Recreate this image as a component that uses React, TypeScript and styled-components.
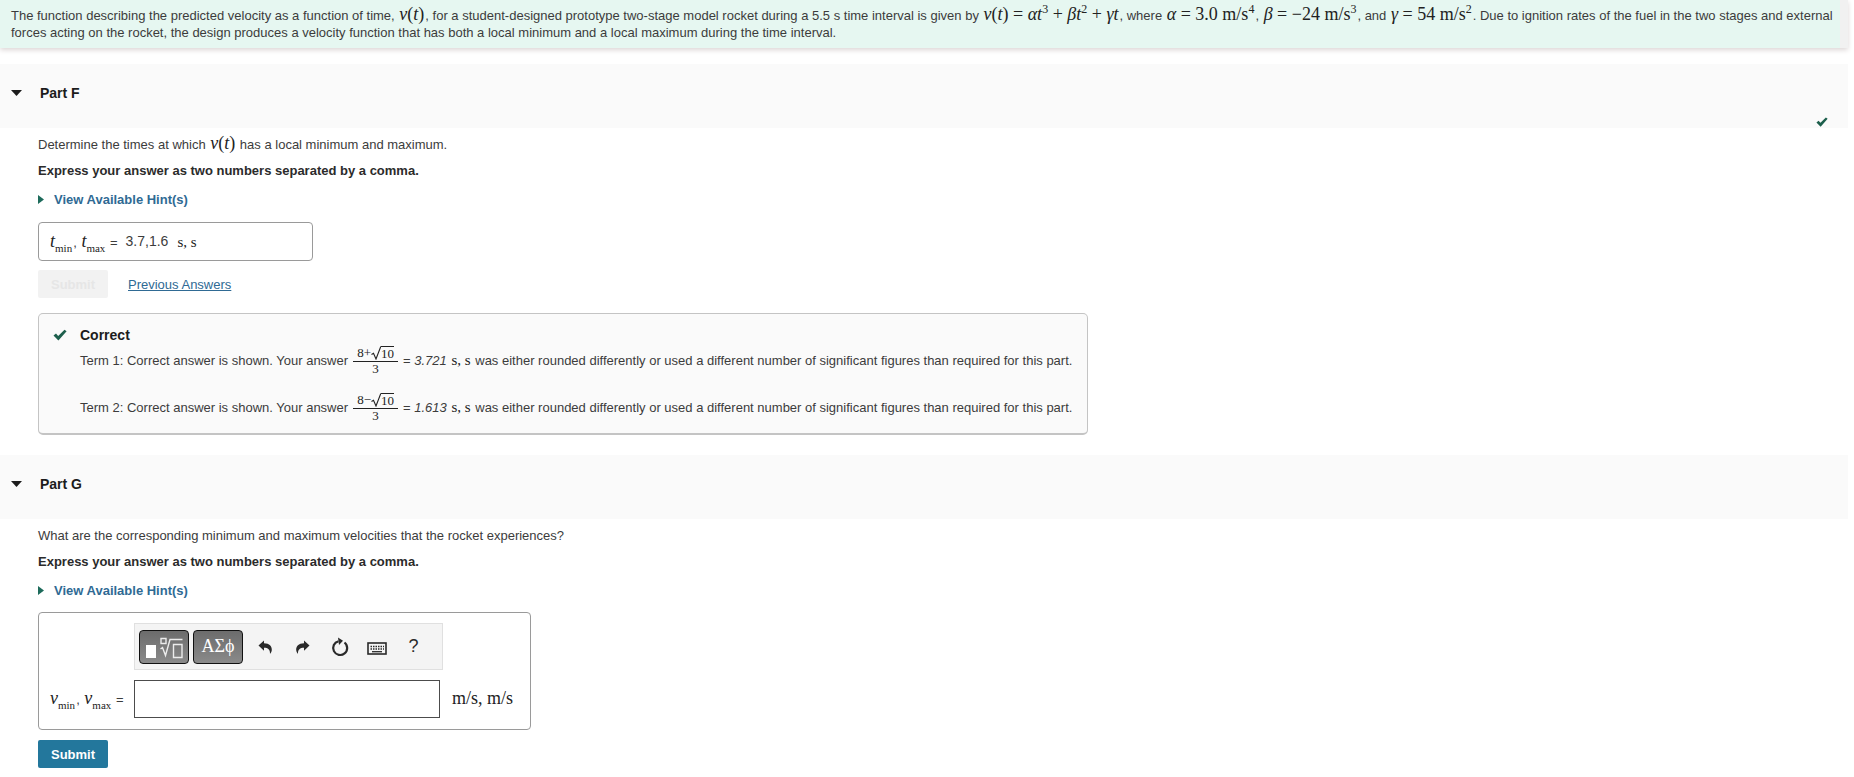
import React, { ReactNode } from "react";
import styled, { createGlobalStyle } from "styled-components";

const SANS = '"Liberation Sans", Arial, sans-serif';
const SERIF = '"Liberation Serif", "Times New Roman", serif';

const Global = createGlobalStyle`
  *, *::before, *::after { box-sizing: border-box; }
  body {
    margin: 0;
    background: #fff;
    color: #3c3c3c;
    font-family: ${SANS};
    font-size: 13px;
    line-height: 17px;
  }
  button, input { font: inherit; color: inherit; }
  p, h2, h3 { margin: 0; }
`;

const Page = styled.main`
  margin-right: 6px;
`;

const Intro = styled.header`
  padding: 6px 4px 7px 11px;
  background: #e6f7f1;
  border-right: 8px solid #f1f1f1;
  box-shadow: 0 2px 5px #dcd6d6;
`;

const PartSection = styled.section<{ $first?: boolean }>`
  margin-top: ${(p) => (p.$first ? 16 : 20)}px;
`;

const PartHeader = styled.div`
  display: flex;
  justify-content: space-between;
  height: 64px;
  padding-right: 20px;
  background: #fafafa;
`;

const PartToggle = styled.button`
  display: flex;
  align-items: center;
  gap: 18px;
  height: 57px;
  padding: 0 0 0 11px;
  border: 0;
  background: none;
  color: #1c1c1c;
`;

const PartTitle = styled.h2`
  font-size: 14px;
  line-height: 18px;
`;

const DoneMark = styled.span`
  display: flex;
  align-self: flex-end;
`;

const PartBody = styled.div`
  display: flex;
  flex-direction: column;
  align-items: flex-start;
  padding-left: 38px;
`;

const Question = styled.p`
  margin-top: 7px;
  line-height: 20px;
`;

const Instruction = styled.p`
  margin-top: 7px;
  color: #2b2b2b;
  font-weight: bold;
`;

const HintButton = styled.button`
  display: flex;
  align-items: center;
  gap: 10px;
  margin-top: 12px;
  padding: 0;
  border: 0;
  background: none;
  color: #2f6a94;
  font-weight: bold;
`;

const AnswerBox = styled.div`
  display: flex;
  align-items: center;
  gap: 8px;
  width: 275px;
  height: 39px;
  margin-top: 14px;
  padding-left: 10px;
  border: 1px solid #9a9a9a;
  border-radius: 4px;
`;

const AnswerValue = styled.span`
  font-size: 14px;
`;

const Actions = styled.div`
  display: flex;
  align-items: center;
  gap: 20px;
  margin-top: 9px;
`;

const SubmitButton = styled.button`
  width: 70px;
  height: 28px;
  padding: 0;
  border: 0;
  border-radius: 2px;
  background: #23779c;
  color: #fff;
  font-weight: bold;

  &:disabled {
    background: #f2f2f2;
    color: #e6e6e6;
  }
`;

const TextLink = styled.a`
  color: #2f6a94;
`;

const Feedback = styled.div`
  display: flex;
  gap: 13px;
  margin-top: 15px;
  padding: 12px 15px 10px 14px;
  border: 1px solid #c4c4c4;
  border-bottom-width: 2px;
  border-radius: 5px;
  background: #fafafa;
`;

const FeedbackMark = styled.span`
  display: flex;
  height: 18px;
  align-items: center;
`;

const FeedbackTitle = styled.h3`
  color: #1c1c1c;
  font-size: 14px;
  line-height: 18px;
`;

const Term = styled.p`
  display: flex;
  align-items: center;
  height: 32px;

  & + & { margin-top: 15px; }
`;

const FractionBox = styled.span`
  display: inline-flex;
  flex-direction: column;
  align-items: center;
  width: 45px;
  margin: 0 5px;
  color: #222;
  font-family: ${SERIF};
  font-size: 13px;
  line-height: 14px;
`;

const Numerator = styled.span`
  display: flex;
  justify-content: center;
  width: 100%;
  padding: 1px 0;
  border-bottom: 1px solid #222;
`;

const Radicand = styled.span`
  border-top: 1px solid #222;
  line-height: 13px;
`;

const MathText = styled.span<{ $size?: number }>`
  margin: 0 1px;
  color: #222;
  font-family: ${SERIF};
  font-size: ${(p) => p.$size ?? 18}px;
  line-height: 16px;
  white-space: nowrap;

  sup { font-size: 12px; line-height: 0; }
  sub { font-size: 11px; line-height: 0; }
`;

const EntryBox = styled.div`
  display: grid;
  grid-template-columns: 85px 306px auto;
  align-items: center;
  row-gap: 10px;
  width: 493px;
  margin-top: 13px;
  padding: 10px 0 11px 10px;
  border: 1px solid #9a9a9a;
  border-radius: 4px;
`;

const Toolbar = styled.div`
  display: flex;
  grid-column: 2 / 4;
  align-items: center;
  width: 309px;
  height: 47px;
  padding-left: 4px;
  border: 1px solid #e0e0e0;
  background: #f4f4f4;
`;

const PaletteButton = styled.button`
  display: flex;
  align-items: center;
  justify-content: center;
  width: 50px;
  height: 34px;
  margin-right: 4px;
  padding: 0;
  border: 1px solid #111;
  border-radius: 4px;
  background: linear-gradient(#6c6c6c, #8a8a8a);
  color: #fff;
  font-family: ${SERIF};
  font-size: 18px;
`;

const ToolButton = styled.button`
  display: flex;
  align-items: center;
  justify-content: center;
  width: 37px;
  height: 34px;
  padding: 0;
  border: 0;
  background: none;
  color: #2a2a2a;
  font-size: 18px;
`;

const EntryLabel = styled.label`
  white-space: nowrap;
`;

const EntryInput = styled.input`
  width: 100%;
  height: 38px;
  padding: 0 8px;
  border: 1px solid #4c4c4c;
  background: #fff;
`;

const Units = styled.span`
  padding-left: 11px;
`;

const SubmitRow = styled.div`
  margin-top: 10px;
`;

const DownArrow = () => (
  <svg width="11" height="6" viewBox="0 0 11 6" aria-hidden="true">
    <path d="M0 0H11L5.5 6Z" fill="#1c1c1c" />
  </svg>
);

const RightArrow = () => (
  <svg width="6" height="9" viewBox="0 0 6 9" aria-hidden="true">
    <path d="M0 0L6 4.5L0 9Z" fill="#1d6b5b" />
  </svg>
);

const Check = ({ size = 14 }: { size?: number }) => (
  <svg width={size} height="12" viewBox="0 0 14 12" aria-hidden="true">
    <path d="M0.5 6.5L3 4.5L5.2 7L11.5 0.8L13.6 2.2L5.4 11.5Z" fill="#1d5f4c" />
  </svg>
);

const TemplateIcon = () => (
  <svg width="40" height="26" viewBox="0 0 40 26" aria-hidden="true">
    <path d="M2 11H12V24H2Z" fill="#fff" />
    <path
      d="M17 4.500H22V9.500H17ZM16.500 15L18.500 13.500L21.500 21.500L26 5.500H38.500M29.500 10.500H38V23.500H29.500Z"
      fill="none"
      stroke="#ececec"
      strokeWidth="1.400"
    />
  </svg>
);

const CurvedArrow = ({ flip = false }: { flip?: boolean }) => (
  <svg width="15" height="14" viewBox="0 0 15 14" aria-hidden="true">
    <path
      transform={flip ? "matrix(-1 0 0 1 15 0)" : undefined}
      d="M0.500 5.500L6 0.500V3.300C11.500 3.400 14 6.500 13.800 10C13.700 11.800 12.800 13.200 12 13.700C12.200 9.500 10 7.800 6 7.800V10.700Z"
      fill="currentColor"
    />
  </svg>
);

const ResetIcon = () => (
  <svg width="18" height="20" viewBox="0 0 18 20" aria-hidden="true">
    <path d="M13.500 5.500A7 7 0 1 1 7.500 4.200" fill="none" stroke="currentColor" strokeWidth="2.200" />
    <path d="M7 0.500L12 3.800L8 8Z" fill="currentColor" />
  </svg>
);

const KeyboardIcon = () => (
  <svg width="20" height="16" viewBox="0 0 20 16" aria-hidden="true">
    <rect x="1" y="4" width="18" height="11" fill="none" stroke="currentColor" strokeWidth="1.600" />
    <path
      d="M3.500 7.500H17M3.500 10H17"
      stroke="currentColor"
      strokeWidth="1.500"
      strokeDasharray="1.500 1"
    />
    <path d="M5 12.700H15" stroke="currentColor" strokeWidth="1.300" />
  </svg>
);

const RadicalSign = () => (
  <svg width="10" height="14" viewBox="0 0 10 14" aria-hidden="true">
    <path d="M0.500 8.500L2.500 7.200L5 13L9.800 0.500" fill="none" stroke="#222" strokeWidth="1.100" />
  </svg>
);

const Fraction = ({ sign }: { sign: string }) => (
  <FractionBox>
    <Numerator>
      8{sign}
      <RadicalSign />
      <Radicand>10</Radicand>
    </Numerator>
    <span>3</span>
  </FractionBox>
);

const Var = ({ name, index }: { name: string; index: string }) => (
  <MathText>
    <i>{name}</i>
    <sub>{index}</sub>
  </MathText>
);

interface PartProps {
  title: string;
  first?: boolean;
  done?: boolean;
  question: ReactNode;
  children: ReactNode;
}

const Part = ({ title, first, done, question, children }: PartProps) => (
  <PartSection $first={first}>
    <PartHeader>
      <PartToggle type="button" aria-expanded="true">
        <DownArrow />
        <PartTitle>{title}</PartTitle>
      </PartToggle>
      {done && (
        <DoneMark>
          <Check size={12} />
        </DoneMark>
      )}
    </PartHeader>
    <PartBody>
      <Question>{question}</Question>
      <Instruction>Express your answer as two numbers separated by a comma.</Instruction>
      <HintButton type="button">
        <RightArrow />
        View Available Hint(s)
      </HintButton>
      {children}
    </PartBody>
  </PartSection>
);

const terms = [
  { number: 1, sign: "+", value: "3.721" },
  { number: 2, sign: "−", value: "1.613" },
];

export default function App() {
  return (
    <>
      <Global />
      <Page>
        <Intro>
          <p>
            The function describing the predicted velocity as a function of time,{" "}
            <MathText><i>v</i>(<i>t</i>)</MathText>, for a student-designed prototype two-stage model
            rocket during a 5.5 s time interval is given by{" "}
            <MathText>
              <i>v</i>(<i>t</i>) = <i>αt</i><sup>3</sup> + <i>βt</i><sup>2</sup> + <i>γt</i>
            </MathText>
            , where <MathText><i>α</i> = 3.0 m/s<sup>4</sup></MathText>,{" "}
            <MathText><i>β</i> = −24 m/s<sup>3</sup></MathText>, and{" "}
            <MathText><i>γ</i> = 54 m/s<sup>2</sup></MathText>. Due to ignition rates of the fuel in
            the two stages and external{" "}
            forces acting on the rocket, the design produces a velocity function that has both a
            local minimum and a local maximum during the time interval.
          </p>
        </Intro>

        <Part
          title="Part F"
          first
          done
          question={
            <>
              Determine the times at which <MathText><i>v</i>(<i>t</i>)</MathText> has a local
              minimum and maximum.
            </>
          }
        >
          <AnswerBox>
            <span>
              <Var name="t" index="min" />, <Var name="t" index="max" /> =
            </span>
            <AnswerValue>3.7,1.6</AnswerValue>
            <MathText $size={15}>s, s</MathText>
          </AnswerBox>
          <Actions>
            <SubmitButton type="button" disabled>Submit</SubmitButton>
            <TextLink href="#previous">Previous Answers</TextLink>
          </Actions>
          <Feedback>
            <FeedbackMark>
              <Check />
            </FeedbackMark>
            <div>
              <FeedbackTitle>Correct</FeedbackTitle>
              {terms.map((term) => (
                <Term key={term.number}>
                  <span>Term {term.number}: Correct answer is shown. Your answer</span>
                  <Fraction sign={term.sign} />
                  <span>
                    = <i>{term.value}</i> <MathText $size={15}>s, s</MathText> was either rounded
                    differently or used a different number of significant figures than required for
                    this part.
                  </span>
                </Term>
              ))}
            </div>
          </Feedback>
        </Part>

        <Part
          title="Part G"
          question="What are the corresponding minimum and maximum velocities that the rocket experiences?"
        >
          <EntryBox>
            <Toolbar role="toolbar">
              <PaletteButton type="button" aria-label="Templates"><TemplateIcon /></PaletteButton>
              <PaletteButton type="button">ΑΣϕ</PaletteButton>
              <ToolButton type="button" aria-label="Undo"><CurvedArrow /></ToolButton>
              <ToolButton type="button" aria-label="Redo"><CurvedArrow flip /></ToolButton>
              <ToolButton type="button" aria-label="Reset"><ResetIcon /></ToolButton>
              <ToolButton type="button" aria-label="Keyboard"><KeyboardIcon /></ToolButton>
              <ToolButton type="button">?</ToolButton>
            </Toolbar>
            <EntryLabel htmlFor="velocities">
              <Var name="v" index="min" />, <Var name="v" index="max" /> =
            </EntryLabel>
            <EntryInput id="velocities" type="text" />
            <Units>
              <MathText>m/s, m/s</MathText>
            </Units>
          </EntryBox>
          <SubmitRow>
            <SubmitButton type="button">Submit</SubmitButton>
          </SubmitRow>
        </Part>
      </Page>
    </>
  );
}
